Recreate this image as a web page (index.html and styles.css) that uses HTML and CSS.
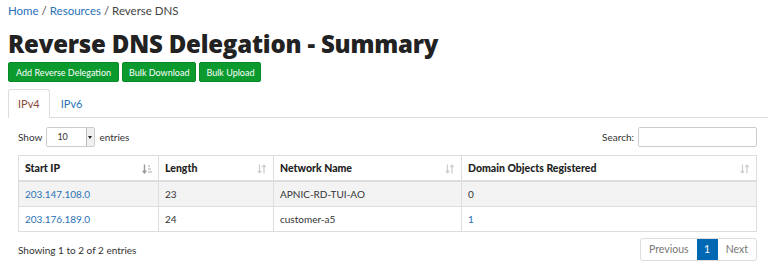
FILE: index.html
```html
<!DOCTYPE html>
<html>
<head>
    <title>Reverse DNS Delegation - Summary</title>
    <link rel="stylesheet" href="styles.css">
</head>
<body>
    <div class="breadcrumb">
        <a href="#">Home</a> / <a href="#">Resources</a> / Reverse DNS
    </div>

    <h1>Reverse DNS Delegation - Summary</h1>

    <div class="actions">
        <button>Add Reverse Delegation</button>
        <button>Bulk Download</button>
        <button>Bulk Upload</button>
    </div>

    <ul class="tabs">
        <li class="active"><a href="#">IPv4</a></li>
        <li><a href="#">IPv6</a></li>
    </ul>

    <div class="tab-panel">
        <div class="controls">
            <label>Show
                <span class="select">10<span class="caret"></span></span>
                entries</label>
            <label>Search: <span class="search"></span></label>
        </div>

        <table class="grid">
            <thead>
                <tr>
                    <th class="c1">Start IP
                        <svg class="sort" width="10" height="10" viewBox="0 0 10 10">
                            <path d="M2.5 0.5v8M0.8 6.8l1.7 2 1.7-2" stroke="#999" stroke-width="1.4" fill="none"/>
                            <path d="M6 2h2M6 5h3M6 8h4" stroke="#aaa" stroke-width="1.2"/>
                        </svg>
                    </th>
                    <th class="c2">Length
                        <svg class="sort" width="10" height="10" viewBox="0 0 10 10">
                            <path d="M2.5 0.5v8M0.8 6.8l1.7 2 1.7-2M7 9.5v-8M5.3 3.2l1.7-2 1.7 2" stroke="#ccc" stroke-width="1.2" fill="none"/>
                        </svg>
                    </th>
                    <th class="c3">Network Name
                        <svg class="sort" width="10" height="10" viewBox="0 0 10 10">
                            <path d="M2.5 0.5v8M0.8 6.8l1.7 2 1.7-2M7 9.5v-8M5.3 3.2l1.7-2 1.7 2" stroke="#ccc" stroke-width="1.2" fill="none"/>
                        </svg>
                    </th>
                    <th>Domain Objects Registered
                        <svg class="sort" width="10" height="10" viewBox="0 0 10 10">
                            <path d="M2.5 0.5v8M0.8 6.8l1.7 2 1.7-2M7 9.5v-8M5.3 3.2l1.7-2 1.7 2" stroke="#ccc" stroke-width="1.2" fill="none"/>
                        </svg>
                    </th>
                </tr>
            </thead>
            <tbody>
                <tr class="odd">
                    <td><a href="#">203.147.108.0</a></td>
                    <td>23</td>
                    <td>APNIC-RD-TUI-AO</td>
                    <td>0</td>
                </tr>
                <tr>
                    <td><a href="#">203.176.189.0</a></td>
                    <td>24</td>
                    <td>customer-a5</td>
                    <td><a href="#">1</a></td>
                </tr>
            </tbody>
        </table>

        <div class="footer">
            <div class="info">Showing 1 to 2 of 2 entries</div>
            <div class="pager">
                <a href="#" class="page">Previous</a>
                <a href="#" class="page current">1</a>
                <a href="#" class="page">Next</a>
            </div>
        </div>
    </div>
</body>
</html>
```

FILE: styles.css
```css
body {
    font-family: Lato, "Open Sans", sans-serif;
    font-size: 10px;
    color: #333;
    margin: 0;
    padding: 0 0 0 8px;
}
a {
    color: #2a72b5;
    text-decoration: none;
}
.breadcrumb {
    font-size: 11.5px;
    line-height: 14px;
    padding-top: 4px;
    color: #444;
}
h1 {
    font-family: "Open Sans", sans-serif;
    font-weight: 800;
    font-size: 24px;
    line-height: 30px;
    color: #222;
    margin: 11px 0 3px;
    letter-spacing: -0.2px;
}
.actions {
    display: flex;
    gap: 3px;
}
.actions button {
    font-family: inherit;
    font-size: 9px;
    height: 20px;
    padding: 0 6px;
    color: #fff;
    background: #0a9a2e;
    border: 1px solid #078a27;
    border-radius: 2px;
}
.actions button:first-child {
    padding: 0 7px;
}
.tabs {
    list-style: none;
    margin: 7px 0 0;
    padding: 0;
    display: flex;
    border-bottom: 1px solid #ddd;
}
.tabs li a {
    display: block;
    height: 27px;
    line-height: 27px;
    padding: 0 10px;
    font-size: 11px;
    border: 1px solid transparent;
    border-bottom: none;
    border-radius: 3px 3px 0 0;
    margin-bottom: -1px;
}
.tabs li.active a {
    color: #8a4a3a;
    background: #fff;
    border-color: #ddd;
    height: 28px;
    padding: 0 9px;
}
.tab-panel {
    padding: 9px 11px 0 10px;
}
.controls {
    display: flex;
    justify-content: space-between;
    align-items: center;
    height: 20px;
}
.controls label {
    display: flex;
    align-items: center;
    gap: 4px;
}
.select {
    position: relative;
    display: inline-block;
    box-sizing: border-box;
    width: 49px;
    height: 20px;
    line-height: 18px;
    padding-left: 10px;
    font-size: 9px;
    border: 1px solid #ccc;
    border-radius: 2px;
    background: #fff;
}
.caret {
    position: absolute;
    right: 0;
    top: 0;
    width: 7px;
    height: 18px;
    background: #f0f0f0;
    border-left: 1px solid #bbb;
}
.caret::after {
    content: '';
    position: absolute;
    left: 1px;
    top: 8px;
    border: 2.5px solid transparent;
    border-top: 3px solid #222;
}
.search {
    display: inline-block;
    box-sizing: border-box;
    width: 119px;
    height: 20px;
    border: 1px solid #ccc;
    border-radius: 2px;
}
.grid {
    width: 100%;
    margin-top: 8px;
    border-collapse: collapse;
    border: 1px solid #ddd;
}
.grid th, .grid td {
    text-align: left;
    border: 1px solid #ddd;
    padding: 0 6px;
}
.grid th {
    height: 24px;
    font-size: 10.5px;
    font-weight: 900;
    color: #222;
    position: relative;
    border-bottom: 2px solid #ddd;
}
.grid td {
    height: 24px;
}
.grid .c1 { width: 127px; }
.grid .c2 { width: 102px; }
.grid .c3 { width: 175px; }
.grid tr.odd td {
    background: #f3f3f3;
}
.sort {
    position: absolute;
    right: 6px;
    top: 8px;
}
.footer {
    display: flex;
    justify-content: space-between;
    align-items: center;
    margin-top: 6px;
}
.pager {
    display: flex;
    border: 1px solid #ddd;
    border-radius: 3px;
}
.page {
    height: 21px;
    line-height: 21px;
    padding: 0 8px;
    color: #777;
    font-size: 10.5px;
}
.page.current {
    background: #0068b3;
    color: #fff;
    padding: 0 7.5px;
}
```
